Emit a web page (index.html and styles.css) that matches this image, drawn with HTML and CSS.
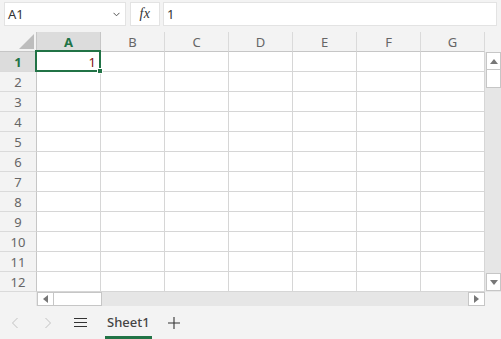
FILE: index.html
```html
<!DOCTYPE html>
<html>
<head>
<meta charset="utf-8">
<link rel="stylesheet" href="styles.css">
</head>
<body>
<div class="app">
  <div class="toolbar">
    <div class="box namebox"><span>A1</span>
      <svg class="chev" width="7" height="5" viewBox="0 0 7 5"><path d="M0.5 0.8 L3.5 3.8 L6.5 0.8" fill="none" stroke="#555" stroke-width="1"/></svg>
    </div>
    <div class="box fxbox"><span class="fx">fx</span></div>
    <div class="box formula"><span>1</span></div>
  </div>

  <div class="grid">
    <div class="corner"><svg width="15" height="15" viewBox="0 0 15 15"><polygon points="15,0 15,15 0,15" fill="#bdbdbd"/></svg></div>
    <div class="ch sel">A</div><div class="ch">B</div><div class="ch">C</div><div class="ch">D</div><div class="ch">E</div><div class="ch">F</div><div class="ch">G</div>
    <div class="chend"></div>

    <div class="rh sel">1</div><div class="c a1"><span class="val">1</span><div class="selbox"><div class="handle"></div></div></div><div class="c"></div><div class="c"></div><div class="c"></div><div class="c"></div><div class="c"></div><div class="c"></div>
    <div class="vscroll">
      <div class="sbtn"><svg width="8" height="5" viewBox="0 0 8 5"><polygon points="4,0 8,5 0,5" fill="#777"/></svg></div>
      <div class="vthumb"></div>
      <div class="vtrack"></div>
      <div class="sbtn"><svg width="8" height="5" viewBox="0 0 8 5"><polygon points="0,0 8,0 4,5" fill="#777"/></svg></div>
    </div>

    <div class="rh">2</div><div class="c"></div><div class="c"></div><div class="c"></div><div class="c"></div><div class="c"></div><div class="c"></div><div class="c"></div>
    <div class="rh">3</div><div class="c"></div><div class="c"></div><div class="c"></div><div class="c"></div><div class="c"></div><div class="c"></div><div class="c"></div>
    <div class="rh">4</div><div class="c"></div><div class="c"></div><div class="c"></div><div class="c"></div><div class="c"></div><div class="c"></div><div class="c"></div>
    <div class="rh">5</div><div class="c"></div><div class="c"></div><div class="c"></div><div class="c"></div><div class="c"></div><div class="c"></div><div class="c"></div>
    <div class="rh">6</div><div class="c"></div><div class="c"></div><div class="c"></div><div class="c"></div><div class="c"></div><div class="c"></div><div class="c"></div>
    <div class="rh">7</div><div class="c"></div><div class="c"></div><div class="c"></div><div class="c"></div><div class="c"></div><div class="c"></div><div class="c"></div>
    <div class="rh">8</div><div class="c"></div><div class="c"></div><div class="c"></div><div class="c"></div><div class="c"></div><div class="c"></div><div class="c"></div>
    <div class="rh">9</div><div class="c"></div><div class="c"></div><div class="c"></div><div class="c"></div><div class="c"></div><div class="c"></div><div class="c"></div>
    <div class="rh">10</div><div class="c"></div><div class="c"></div><div class="c"></div><div class="c"></div><div class="c"></div><div class="c"></div><div class="c"></div>
    <div class="rh">11</div><div class="c"></div><div class="c"></div><div class="c"></div><div class="c"></div><div class="c"></div><div class="c"></div><div class="c"></div>
    <div class="rh">12</div><div class="c"></div><div class="c"></div><div class="c"></div><div class="c"></div><div class="c"></div><div class="c"></div><div class="c"></div>
  </div>

  <div class="hscroll">
    <div class="hspace"></div>
    <div class="htrack">
      <div class="hbtn"><svg width="5" height="8" viewBox="0 0 5 8"><polygon points="5,0 5,8 0,4" fill="#777"/></svg></div>
      <div class="hthumb"></div>
      <div class="hfill"></div>
      <div class="hbtn"><svg width="5" height="8" viewBox="0 0 5 8"><polygon points="0,0 5,4 0,8" fill="#777"/></svg></div>
    </div>
    <div class="hend"></div>
  </div>

  <div class="tabs">
    <svg class="nav prev" width="8" height="12" viewBox="0 0 8 12"><path d="M6.5 1 L1.5 6 L6.5 11" fill="none" stroke="#c2c2c2" stroke-width="1"/></svg>
    <svg class="nav next" width="8" height="12" viewBox="0 0 8 12"><path d="M1.5 1 L6.5 6 L1.5 11" fill="none" stroke="#c2c2c2" stroke-width="1"/></svg>
    <svg class="menu" width="13" height="10" viewBox="0 0 13 10"><path d="M0 0.5 H13 M0 4.5 H13 M0 8.5 H13" stroke="#333" stroke-width="1.2"/></svg>
    <div class="tab">Sheet1</div>
    <svg class="plus" width="12" height="12" viewBox="0 0 12 12"><path d="M6 0 V12 M0 6 H12" stroke="#333" stroke-width="1.1"/></svg>
  </div>
</div>
</body>
</html>
```

FILE: styles.css
```css
* { box-sizing: border-box; }
html, body { margin: 0; padding: 0; }
body {
  width: 501px;
  height: 339px;
  overflow: hidden;
  background: #f3f3f3;
  font-family: "Noto Sans", "Open Sans", sans-serif;
  font-size: 13px;
  color: #333;
}
.app { display: flex; flex-direction: column; width: 501px; height: 339px; }

.toolbar {
  display: flex;
  height: 33px;
  padding: 2px 4px 0 4px;
  align-items: flex-start;
}
.box {
  height: 24px;
  background: #fff;
  border: 1px solid #e3e3e3;
  display: flex;
  align-items: center;
}
.namebox { width: 122px; padding: 0 5px 0 3px; justify-content: space-between; }
.namebox span { font-size: 13px; color: #333; }
.chev { margin-top: 1px; }
.fxbox { width: 30px; margin-left: 4px; justify-content: center; }
.fx { font-family: "Liberation Serif", serif; font-style: italic; font-size: 14px; color: #333; letter-spacing: 0.5px; }
.formula { flex: 1; margin-left: 3px; padding-left: 3px; }
.formula span { font-size: 13px; color: #333; }

.grid {
  display: grid;
  grid-template-columns: 37px repeat(7, 64px) 16px;
  grid-template-rows: 20px repeat(12, 20px);
}
.corner {
  background: #f3f3f3;
  border-right: 1px solid #c6c6c6;
  border-bottom: 1px solid #c6c6c6;
  display: flex;
  justify-content: flex-end;
  align-items: flex-end;
  padding: 0 2px 2px 0;
}
.ch {
  background: #f3f3f3;
  border-right: 1px solid #dadada;
  border-bottom: 1px solid #c6c6c6;
  display: flex;
  align-items: center;
  justify-content: center;
  color: #666;
  font-size: 13px;
}
.ch.sel { background: #dcdcdc; color: #217346; font-weight: bold; border-right-color: #c6c6c6; }
.chend { background: #f3f3f3; border-bottom: 1px solid transparent; }
.rh {
  background: #f3f3f3;
  border-right: 1px solid #c6c6c6;
  border-bottom: 1px solid #dadada;
  display: flex;
  align-items: center;
  justify-content: center;
  color: #666;
  font-size: 13px;
}
.rh.sel { background: #dcdcdc; color: #217346; font-weight: bold; }
.c {
  background: #fff;
  border-right: 1px solid #d6d6d6;
  border-bottom: 1px solid #d6d6d6;
}
.a1 {
  position: relative;
  display: flex;
  align-items: center;
  justify-content: flex-end;
  padding-right: 4px;
}
.val { color: #7b1010; font-size: 13px; }
.selbox {
  position: absolute;
  left: -2px; top: -2px; right: -1px; bottom: -1px;
  border: 2px solid #217346;
}
.handle {
  position: absolute;
  right: -4px; bottom: -4px;
  width: 6px; height: 6px;
  background: #217346;
  border: 1px solid #fff;
}

.vscroll {
  grid-column: 9;
  grid-row: 2 / span 12;
  background: #e6e6e6;
  display: flex;
  flex-direction: column;
  padding: 0 0 1px 1px;
}
.sbtn {
  height: 18px;
  background: #fff;
  border: 1px solid #c6c6c6;
  display: flex;
  align-items: center;
  justify-content: center;
}
.vthumb { height: 18px; background: #fff; border: 1px solid #c6c6c6; border-top: none; }
.vtrack { flex: 1; }

.hscroll { display: flex; height: 14px; }
.hspace { width: 36px; }
.htrack { flex: 1; background: #e6e6e6; display: flex; padding-left: 1px; }
.hbtn {
  width: 17px;
  background: #fff;
  border: 1px solid #c6c6c6;
  display: flex;
  align-items: center;
  justify-content: center;
}
.hthumb { width: 48px; background: #fff; border: 1px solid #c6c6c6; border-left: none; }
.hfill { flex: 1; }
.hend { width: 16px; }

.tabs {
  flex: 1;
  display: flex;
  align-items: center;
  position: relative;
}
.nav.prev { margin-left: 11px; }
.nav.next { margin-left: 25px; }
.menu { margin-left: 22px; }
.tab {
  margin-left: 18px;
  height: 33px;
  padding: 0 2px;
  display: flex;
  align-items: center;
  font-size: 13px;
  font-weight: 500;
  color: #444;
  border-bottom: 3px solid #217346;
  padding-top: 2px;
}
.plus { margin-left: 16px; }
```
